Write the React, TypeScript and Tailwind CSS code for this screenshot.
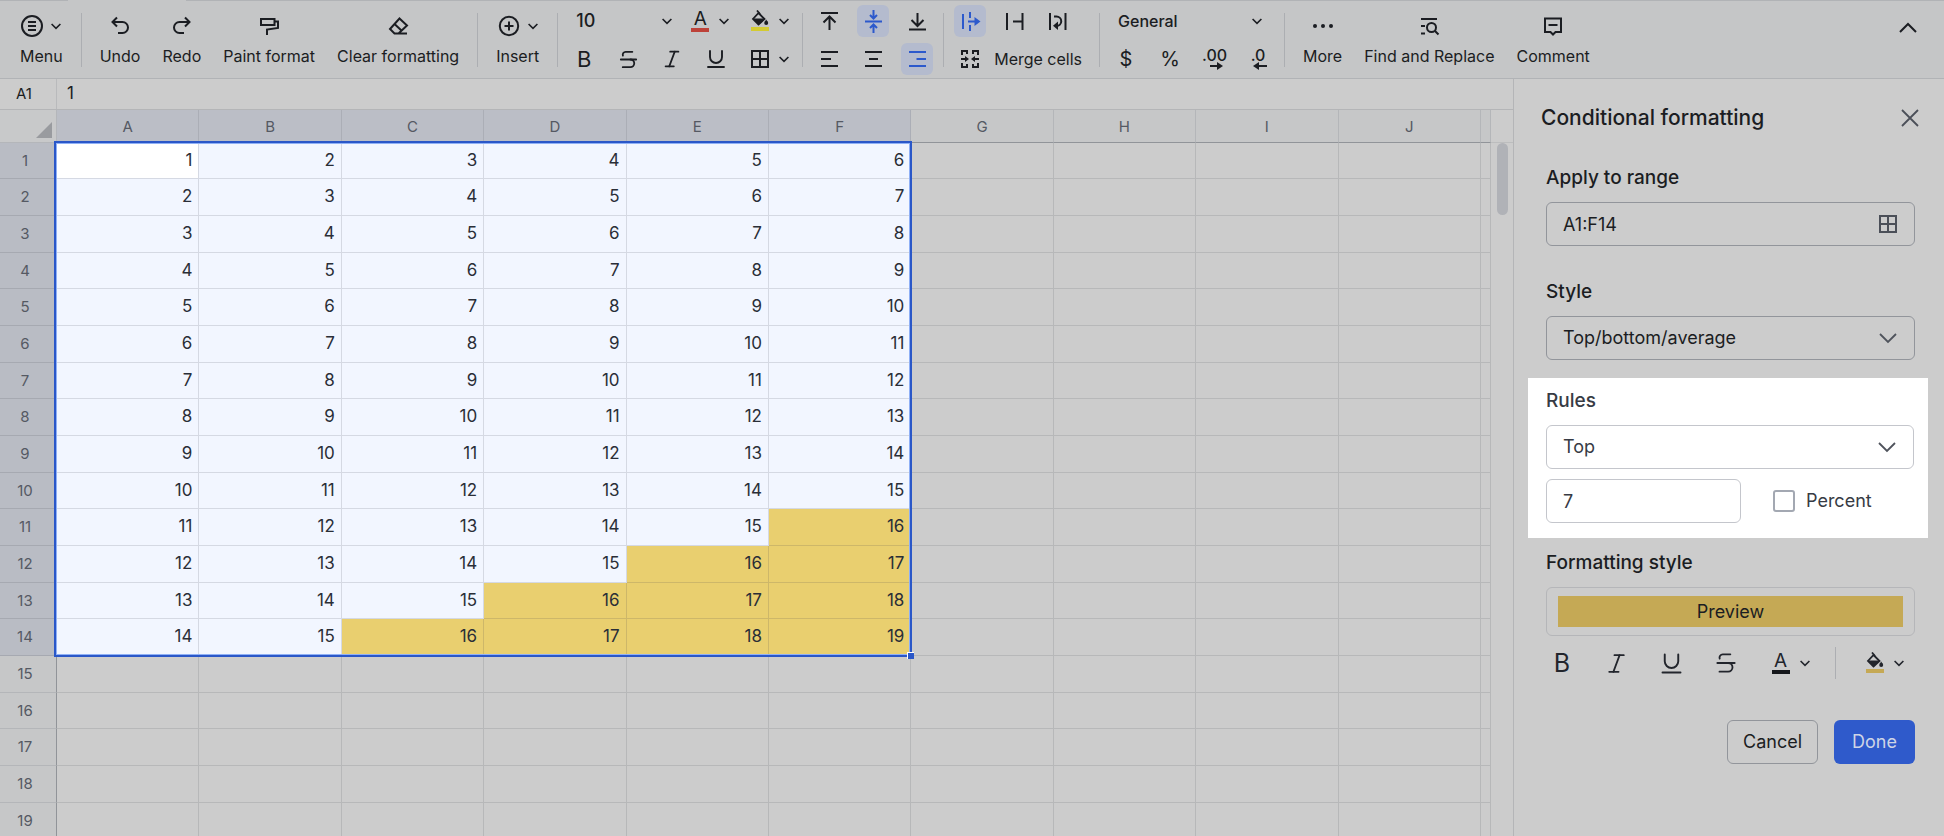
import { useState, type ReactNode } from "react";
import { Italic, Strikethrough, Underline } from "lucide-react";

const COLUMNS = ["A", "B", "C", "D", "E", "F", "G", "H", "I", "J"];
const ROW_COUNT = 19;
const SELECTED_COLS = 6;
const SELECTED_ROWS = 14;
const TOP_THRESHOLD = 16;

export default function App() {
  return (
    <div className="flex h-screen flex-col overflow-hidden bg-[#cccccc] font-['Inter','Liberation_Sans',sans-serif] text-base text-[#1b1d22]">
      {/* bottom edge of the tab strip, open under the active tab */}
      <div className="flex h-px shrink-0 bg-[#c5c6c7]">
        <div className="w-[68px] bg-[#b1b3b6]" />
        <div className="ml-[118px] flex-1 bg-[#b1b3b6]" />
      </div>
      <Toolbar />
      <div className="flex min-h-0 flex-1">
        <main className="flex min-w-0 flex-1 flex-col">
          <FormulaBar />
          <div className="flex min-h-0 flex-1">
            <Sheet />
            <div className="w-[22px] shrink-0">
              <div className="h-[33px] border-b border-[#bcbdbe]" />
              <div className="mx-auto h-[72px] w-[11px] rounded-full bg-[#b0b2b7]" />
            </div>
          </div>
        </main>
        <FormattingPanel />
      </div>
    </div>
  );
}

/* ---------- Toolbar ---------- */

function Toolbar() {
  return (
    <header className="flex h-[78px] shrink-0 items-center border-b border-[#b1b3b6] bg-[#c5c6c7] pt-px pr-5 pl-[2px]">
      <LabelGroup>
        <LabelButton label="Menu" icon={<MenuIcon />} menu />
      </LabelGroup>
      <Divider />
      <LabelGroup>
        <LabelButton label="Undo" icon={<UndoIcon />} />
        <LabelButton label="Redo" icon={<RedoIcon />} />
        <LabelButton label="Paint format" icon={<PaintIcon />} />
        <LabelButton label="Clear formatting" icon={<EraserIcon />} />
      </LabelGroup>
      <Divider />
      <LabelGroup>
        <LabelButton label="Insert" icon={<PlusIcon />} menu />
      </LabelGroup>
      <Divider />

      <ToolGroup>
        <div className="flex gap-3">
          <ToolbarSelect label="Font size" value="10" className="text-lg" />
          <div className="flex">
            <IconButton label="Text color">
              <TextColor bar="bg-[#bd4239]" />
            </IconButton>
            <ChevronButton label="Text color options" />
          </div>
          <div className="flex">
            <IconButton label="Fill color">
              <BucketIcon color="#d3cb32" />
            </IconButton>
            <ChevronButton label="Fill color options" />
          </div>
        </div>
        <div className="flex gap-3">
          <IconButton label="Bold">
            <span className="text-[22px] leading-6">B</span>
          </IconButton>
          <IconButton label="Strikethrough">
            <Strikethrough size={23} strokeWidth={1.9} />
          </IconButton>
          <IconButton label="Italic">
            <Italic size={22} strokeWidth={1.9} />
          </IconButton>
          <IconButton label="Underline">
            <Underline size={24} strokeWidth={1.9} />
          </IconButton>
          <div className="flex">
            <IconButton label="Borders">
              <BorderIcon />
            </IconButton>
            <ChevronButton label="Border options" />
          </div>
        </div>
      </ToolGroup>
      <Divider />

      <ToolGroup>
        <div className="flex gap-3">
          <IconButton label="Align top">
            <Glyph d="M4 4h17M12.5 21V8M6.5 13.5l6-6 6 6" />
          </IconButton>
          <IconButton label="Align middle" active>
            <Glyph d="M4 12.5h17M12.5 1v8M9 6l3.5 3.5L16 6M12.5 24v-8M9 19l3.5-3.5L16 19" />
          </IconButton>
          <IconButton label="Align bottom">
            <Glyph d="M4 20.5h17M12.5 4v13M6.5 11l6 6 6-6" />
          </IconButton>
        </div>
        <div className="flex gap-3">
          <IconButton label="Align left">
            <Glyph d="M4 5h17M4 12h10M4 19h17" />
          </IconButton>
          <IconButton label="Align center">
            <Glyph d="M4 5h17M8 12h9M4 19h17" />
          </IconButton>
          <IconButton label="Align right" active>
            <Glyph d="M4 5h17M11.5 12H21M4 19h17" />
          </IconButton>
        </div>
      </ToolGroup>
      <Divider />

      <ToolGroup>
        <div className="flex gap-3">
          <IconButton label="Overflow text" active>
            <svg width="24" height="24" viewBox="0 0 24 24" fill="none" stroke="currentColor" strokeWidth="2">
              <path d="M5 5v15M12 3v6M12 16v6M10 12.5h8" />
              <path d="M16.5 8l6 4.5-6 4.5z" fill="currentColor" stroke="none" />
            </svg>
          </IconButton>
          <IconButton label="Clip text">
            <Glyph d="M5 4v17M20.5 4v17M11 12.5h9" />
          </IconButton>
          <IconButton label="Wrap text">
            <svg width="24" height="24" viewBox="0 0 24 24" fill="none" stroke="currentColor" strokeWidth="2">
              <path d="M4 4v17M19.5 4v17M8 7.5h2.5a4.5 4.5 0 0 1 0 9.5" />
              <path d="M12 12.500V21l-5-4.200z" fill="currentColor" stroke="none" />
            </svg>
          </IconButton>
        </div>
        <button type="button" className="flex h-8 items-center pr-[7px]">
          <span className="flex w-8 justify-center">
            <MergeIcon />
          </span>
          <span className="ml-2 whitespace-nowrap">Merge cells</span>
        </button>
      </ToolGroup>
      <Divider />

      <ToolGroup>
        <div className="flex pr-3">
          <ToolbarSelect label="Number format" value="General" className="text-base" />
        </div>
        <div className="flex gap-3">
          <IconButton label="Currency">
            <span className="text-[20px] leading-6">$</span>
          </IconButton>
          <IconButton label="Percentage">
            <span className="text-[20px] leading-6">%</span>
          </IconButton>
          <IconButton label="Increase decimals">
            <Decimals text=".00" d="M8 4h8" head="M15 0l6 4-6 4z" />
          </IconButton>
          <IconButton label="Decrease decimals">
            <Decimals text=".0" d="M12 4h9" head="M13 0L7 4l6 4z" />
          </IconButton>
        </div>
      </ToolGroup>
      <Divider />

      <LabelGroup>
        <LabelButton label="More" icon={<DotsIcon />} />
        <LabelButton label="Find and Replace" icon={<FindIcon />} />
        <LabelButton label="Comment" icon={<CommentIcon />} />
      </LabelGroup>

      <button type="button" aria-label="Collapse toolbar" className="mb-6 ml-auto flex h-8 w-8 shrink-0 items-center justify-center">
        <svg width="20" height="12" viewBox="0 0 20 12" fill="none" stroke="currentColor" strokeWidth="2">
          <path d="M2 10l8-8 8 8" />
        </svg>
      </button>
    </header>
  );
}

function LabelGroup({ children }: { children: ReactNode }) {
  return <div className="flex shrink-0 px-[7px] pt-[2px]">{children}</div>;
}

function ToolGroup({ children }: { children: ReactNode }) {
  return <div className="flex shrink-0 flex-col gap-[6px] px-[10px]">{children}</div>;
}

function Divider() {
  return <div className="h-[54px] w-px shrink-0 bg-[#acaeb2]" />;
}

function LabelButton({ label, icon, menu }: { label: string; icon: ReactNode; menu?: boolean }) {
  return (
    <button type="button" className="flex flex-col items-center gap-[6px] px-[11px] whitespace-nowrap">
      <span className="flex h-6 items-center gap-2">
        {icon}
        {menu && <Chevron />}
      </span>
      <span className="leading-6">{label}</span>
    </button>
  );
}

function IconButton({ label, active, children }: { label: string; active?: boolean; children: ReactNode }) {
  return (
    <button
      type="button"
      aria-label={label}
      className={`flex h-8 w-8 shrink-0 items-center justify-center rounded-md ${
        active ? "bg-[#b4bbce] text-[#2c59cc]" : ""
      }`}
    >
      {children}
    </button>
  );
}

function ChevronButton({ label }: { label: string }) {
  return (
    <button type="button" aria-label={label} className="flex h-8 w-4 items-center justify-center">
      <Chevron />
    </button>
  );
}

function ToolbarSelect({ label, value, className }: { label: string; value: string; className: string }) {
  return (
    <div className="grid flex-1 items-center">
      <select
        aria-label={label}
        defaultValue={value}
        className={`col-start-1 row-start-1 h-8 w-full appearance-none bg-transparent pl-2 font-medium ${className}`}
      >
        <option>{value}</option>
      </select>
      <span className="pointer-events-none col-start-1 row-start-1 justify-self-end">
        <Chevron />
      </span>
    </div>
  );
}

/* ---------- Sheet ---------- */

function FormulaBar() {
  return (
    <div className="flex h-[31px] shrink-0 border-b border-[#b4b5b7]">
      <input
        aria-label="Cell reference"
        defaultValue="A1"
        className="w-[57px] border-r border-[#b9babc] bg-transparent pr-2 text-center text-[15px]"
      />
      <input aria-label="Formula" defaultValue="1" className="min-w-0 flex-1 bg-transparent px-[10px] text-[17px]" />
    </div>
  );
}

function Sheet() {
  return (
    <div className="relative min-w-0 flex-1 overflow-hidden">
      <table className="w-full table-fixed border-separate border-spacing-0">
        <colgroup>
          <col className="w-[57px]" />
          {COLUMNS.map((c) => (
            <col key={c} />
          ))}
          <col className="w-[10px]" />
        </colgroup>
        <thead>
          <tr className="h-[33px] text-[15px] leading-5 text-[#555963]">
            <td className="border-r border-b border-[#b4b6ba] bg-[#c8c9ca] p-0">
              <svg className="mt-2 mr-1 ml-auto" width="16" height="16" viewBox="0 0 16 16">
                <path d="M16 0v16H0z" fill="#999b9f" />
              </svg>
            </td>
            {COLUMNS.map((c, i) => (
              <th
                key={c}
                scope="col"
                className={`border-r border-b px-0 pt-[2px] pb-0 font-normal ${
                  i < SELECTED_COLS ? "border-[#abaeb6] bg-[#bbbec6]" : "border-r-[#b4b6b9] border-b-[#919499] bg-[#c6c7c8]"
                }`}
              >
                {c}
              </th>
            ))}
            <td className="border-r border-b border-r-[#b4b6b9] border-b-[#919499] bg-[#c6c7c8]" />
          </tr>
        </thead>
        <tbody>
          {Array.from({ length: ROW_COUNT }, (_, r) => (
            <Row key={r} row={r} />
          ))}
        </tbody>
      </table>

      {/* selection frame with its drag handle */}
      <div className="pointer-events-none absolute top-[31px] left-[54px] h-[516px] w-[calc((100%-67px)*0.6+4px)] border-2 border-[#2a57c8]">
        <div className="h-full border border-[#8fb0f6]" />
        <div className="absolute -right-1 -bottom-1 h-[7px] w-[7px] border-t border-l border-white bg-[#2a57c8]" />
      </div>
    </div>
  );
}

function Row({ row }: { row: number }) {
  const rowSelected = row < SELECTED_ROWS;

  return (
    <tr className={row % 3 === 0 ? "h-9" : "h-[37px]"}>
      <th
        scope="row"
        className={`border-r border-b py-0 pr-[6px] pl-0 text-[15px] leading-5 font-normal text-[#555963] ${
          rowSelected ? "border-[#a6a9b1] bg-[#b9bcc4]" : "border-r-[#919499] border-b-[#b4b6b9] bg-[#c6c7c8]"
        }`}
      >
        {row + 1}
      </th>
      {COLUMNS.map((c, i) => {
        const value = row + i + 1;
        if (!rowSelected || i >= SELECTED_COLS) {
          return <td key={c} className="border-r border-b border-[#b7b8b9] p-0" />;
        }
        let fill = "border-[#d5d9e3] bg-[#f2f6ff]";
        if (value >= TOP_THRESHOLD) fill = "border-[#cdb769] bg-[#e9cf6f]";
        else if (row === 0 && i === 0) fill = "border-[#d5d9e3] bg-white";
        return (
          <td
            key={c}
            className={`border-r border-b pt-0 pr-[6px] pb-[2px] pl-0 text-right text-[17px] leading-5 text-[#2a2e37] ${fill}`}
          >
            {value}
          </td>
        );
      })}
      <td className="border-r border-b border-[#b7b8b9] p-0" />
    </tr>
  );
}

/* ---------- Side panel ---------- */

function FormattingPanel() {
  const [count, setCount] = useState("7");
  const [percent, setPercent] = useState(false);

  return (
    <aside className="flex w-[431px] shrink-0 flex-col border-l border-[#b4b5b7]">
      <div className="flex items-center justify-between pt-[21px] pr-6 pl-[27px]">
        <h2 className="text-[21px] leading-9 font-medium">Conditional formatting</h2>
        <button type="button" aria-label="Close" className="text-[#4b4f58]">
          <svg width="20" height="20" viewBox="0 0 20 20" fill="none" stroke="currentColor" strokeWidth="1.8">
            <path d="M2 2l16 16M18 2L2 18" />
          </svg>
        </button>
      </div>

      <div className="mt-[30px] pr-[29px] pl-8">
        <label htmlFor="range" className="block text-[19px] leading-6 font-medium">
          Apply to range
        </label>
        <div className="mt-3 flex h-11 items-center rounded-md border border-[#92959b] pr-4">
          <input id="range" defaultValue="A1:F14" className="h-full min-w-0 flex-1 bg-transparent pl-4 text-lg" />
          <button type="button" aria-label="Select range" className="text-[#4b4f58]">
            <BorderIcon />
          </button>
        </div>
      </div>

      <div className="mt-[34px] pr-[29px] pl-8">
        <label htmlFor="style" className="block text-[19px] leading-6 font-medium">
          Style
        </label>
        <PanelSelect id="style" value="Top/bottom/average" className="border-[#92959b]" />
      </div>

      <div className="mt-[18px] mr-4 ml-[14px] bg-white pt-[11px] pr-[14px] pb-[15px] pl-[18px] text-[#373b44]">
        <label htmlFor="rule" className="block text-[19px] leading-6 font-medium">
          Rules
        </label>
        <PanelSelect id="rule" value="Top" className="border-[#c4c6cc]" />
        <div className="mt-[10px] flex items-center">
          <input
            aria-label="Rule value"
            value={count}
            onChange={(e) => setCount(e.target.value)}
            className="h-11 w-[195px] rounded-md border border-[#c4c6cc] bg-transparent pl-4 text-lg"
          />
          <label className="ml-8 flex items-center gap-[11px] text-lg">
            <input
              type="checkbox"
              checked={percent}
              onChange={(e) => setPercent(e.target.checked)}
              className="h-[22px] w-[22px] appearance-none rounded-[3px] border-2 border-[#a3a8b2] checked:bg-[#3370ff]"
            />
            Percent
          </label>
        </div>
      </div>

      <div className="mt-[13px] pr-[29px] pl-8">
        <h3 className="text-[19px] leading-6 font-medium">Formatting style</h3>
        <div className="mt-3 rounded-md border border-[#b5b6b9] px-[11px] py-2">
          <div className="h-[31px] bg-[#c5a955] text-center text-lg leading-8">Preview</div>
        </div>
        <div className="mt-[11px] flex items-center justify-between pr-2 text-[#22252c]">
          <IconButton label="Bold format">
            <span className="text-[25px] leading-6">B</span>
          </IconButton>
          <IconButton label="Italic format">
            <Italic size={25} strokeWidth={1.7} />
          </IconButton>
          <IconButton label="Underline format">
            <Underline size={27} strokeWidth={1.7} />
          </IconButton>
          <IconButton label="Strikethrough format">
            <Strikethrough size={26} strokeWidth={1.7} />
          </IconButton>
          <div className="flex">
            <IconButton label="Format text color">
              <TextColor bar="bg-[#15171b]" />
            </IconButton>
            <ChevronButton label="Format text color options" />
          </div>
          <div className="h-8 w-px bg-[#acaeb2]" />
          <div className="flex">
            <IconButton label="Format fill color">
              <BucketIcon color="#c5a955" />
            </IconButton>
            <ChevronButton label="Format fill color options" />
          </div>
        </div>
      </div>

      <div className="mt-[41px] flex justify-end gap-4 pr-[29px] text-lg">
        <button type="button" className="h-11 rounded-md border border-[#92959b] px-[15px]">
          Cancel
        </button>
        <button type="button" className="h-11 rounded-md bg-[#2f5acb] px-[18px] text-[#ced5e6]">
          Done
        </button>
      </div>
    </aside>
  );
}

function PanelSelect({ id, value, className }: { id: string; value: string; className: string }) {
  return (
    <div className="mt-3 grid items-center">
      <select
        id={id}
        defaultValue={value}
        className={`col-start-1 row-start-1 h-11 w-full appearance-none rounded-md border bg-transparent pl-4 text-lg ${className}`}
      >
        <option>{value}</option>
      </select>
      <svg
        className="pointer-events-none col-start-1 row-start-1 mr-[17px] justify-self-end text-[#4f535c]"
        width="20"
        height="12"
        viewBox="0 0 20 12"
        fill="none"
        stroke="currentColor"
        strokeWidth="1.8"
      >
        <path d="M2 2l8 8 8-8" />
      </svg>
    </div>
  );
}

/* ---------- Icons ---------- */

function Glyph({ d }: { d: string }) {
  return (
    <svg width="24" height="24" viewBox="0 0 24 24" fill="none" stroke="currentColor" strokeWidth="2">
      <path d={d} />
    </svg>
  );
}

function Chevron() {
  return (
    <svg width="10" height="7" viewBox="0 0 10 7" fill="none" stroke="currentColor" strokeWidth="1.6">
      <path d="M0.6 1L5 5.4 9.4 1" />
    </svg>
  );
}

function TextColor({ bar }: { bar: string }) {
  return (
    <span className="flex w-[18px] flex-col items-center">
      <span className="text-[19px] leading-[18px]">A</span>
      <span className={`h-1 w-full ${bar}`} />
    </span>
  );
}

function BucketIcon({ color }: { color: string }) {
  return (
    <svg width="20" height="22" viewBox="0 0 20 22">
      <path d="M8.5 3l6 6-6 5.500-5.500-5.500z" fill="none" stroke="currentColor" strokeWidth="1.8" />
      <path d="M2.500 8.500h12.500L8.500 15z" fill="currentColor" />
      <path d="M7 0.500l3 3.500" stroke="currentColor" strokeWidth="1.8" />
      <circle cx="16.200" cy="13" r="2" fill="currentColor" />
      <path d="M16.200 9.500l1.500 2.500h-3z" fill="currentColor" />
      <path d="M1 17h18v4H1z" fill={color} />
    </svg>
  );
}

function MenuIcon() {
  return (
    <svg width="22" height="22" viewBox="0 0 22 22" fill="none" stroke="currentColor" strokeWidth="2">
      <circle cx="11" cy="11" r="10" />
      <path d="M7 7h8M7 11h8M7 15h8" />
    </svg>
  );
}

function PlusIcon() {
  return (
    <svg width="22" height="22" viewBox="0 0 22 22" fill="none" stroke="currentColor" strokeWidth="2">
      <circle cx="11" cy="11" r="9.2" />
      <path d="M11 6.500v9M6.500 11h9" />
    </svg>
  );
}

function UndoIcon() {
  return <Glyph d="M9 3.500L4.500 8 9 12.500M5 8h9.500a5.500 5.500 0 0 1 0 11H10" />;
}

function RedoIcon() {
  return <Glyph d="M15 3.500L19.500 8 15 12.500M19 8H9.500a5.500 5.500 0 0 0 0 11H14" />;
}

function PaintIcon() {
  return <Glyph d="M4 5h13.500v6H4zM17.500 7.500H21v6.500l-11 1.500V21" />;
}

function EraserIcon() {
  return <Glyph d="M13.500 4.500L21 11.500l-8.500 8H8.500L4 15zM8 9.500l8 7.500M8 19.500h13" />;
}

function BorderIcon() {
  return (
    <svg width="20" height="20" viewBox="0 0 20 20" fill="none" stroke="currentColor" strokeWidth="2">
      <path d="M2 2h16v16H2zM10 2v16M2 10h16" />
    </svg>
  );
}

function MergeIcon() {
  return (
    <svg width="20" height="20" viewBox="0 0 20 20" fill="none" stroke="currentColor" strokeWidth="2">
      <path d="M2 6V2h5v3M13 5V2h5v4M2 14v4h5v-3M13 15v3h5v-4M1 10h5M19 10h-5" />
      <path d="M5 7l4 3-4 3zM15 7l-4 3 4 3z" fill="currentColor" stroke="none" />
    </svg>
  );
}

function Decimals({ text, d, head }: { text: string; d: string; head: string }) {
  return (
    <span className="flex w-6 flex-col">
      <span className="text-base leading-[14px] font-medium">{text}</span>
      <svg width="24" height="8" viewBox="0 0 24 8">
        <path d={d} stroke="currentColor" strokeWidth="2" />
        <path d={head} fill="currentColor" />
      </svg>
    </span>
  );
}

function DotsIcon() {
  return (
    <svg width="24" height="24" viewBox="0 0 24 24" fill="currentColor">
      <circle cx="4" cy="12" r="2" />
      <circle cx="12" cy="12" r="2" />
      <circle cx="20" cy="12" r="2" />
    </svg>
  );
}

function FindIcon() {
  return (
    <svg width="24" height="24" viewBox="0 0 24 24" fill="none" stroke="currentColor" strokeWidth="2">
      <path d="M4 5h16M4 12h4M4 19.500h4M18 17l3.500 3.500" />
      <circle cx="14.500" cy="13.500" r="4.500" />
    </svg>
  );
}

function CommentIcon() {
  return <Glyph d="M4 4.500h16v13.500h-5.500L12 20.500 9.500 18H4zM7.500 11h9" />;
}
